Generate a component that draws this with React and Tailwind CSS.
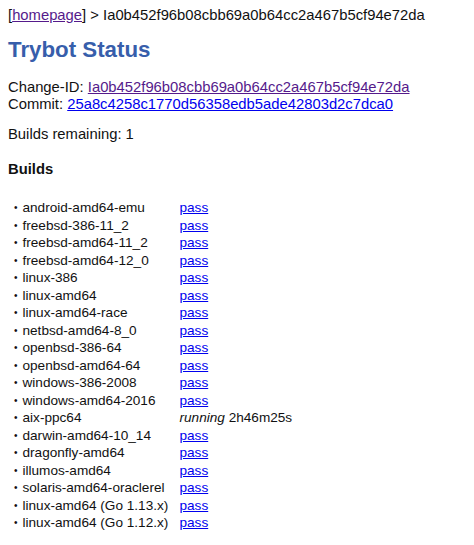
import React from "react";

const builds = [
  ["android-amd64-emu", "pass"],
  ["freebsd-386-11_2", "pass"],
  ["freebsd-amd64-11_2", "pass"],
  ["freebsd-amd64-12_0", "pass"],
  ["linux-386", "pass"],
  ["linux-amd64", "pass"],
  ["linux-amd64-race", "pass"],
  ["netbsd-amd64-8_0", "pass"],
  ["openbsd-386-64", "pass"],
  ["openbsd-amd64-64", "pass"],
  ["windows-386-2008", "pass"],
  ["windows-amd64-2016", "pass"],
  ["aix-ppc64", "running"],
  ["darwin-amd64-10_14", "pass"],
  ["dragonfly-amd64", "pass"],
  ["illumos-amd64", "pass"],
  ["solaris-amd64-oraclerel", "pass"],
  ["linux-amd64 (Go 1.13.x)", "pass"],
  ["linux-amd64 (Go 1.12.x)", "pass"],
];

export default function App() {
  return (
    <div
      className="min-h-[545px] bg-white text-[#111] text-[14.8px] leading-[17.4px] px-[8px] pt-[7px]"
      style={{ fontFamily: '"Liberation Sans", Arial, Helvetica, sans-serif' }}
    >
      <div>
        [<a href="#" className="underline text-[#551a8b]">homepage</a>] &gt; Ia0b452f96b08cbb69a0b64cc2a467b5cf94e72da
      </div>
      <h1 className="mt-[13px] text-[22.3px] leading-[26px] font-bold text-[#375eab]">Trybot Status</h1>
      <div className="mt-[15.3px]">
        Change-ID:{" "}
        <a href="#" className="underline text-[#551a8b]">Ia0b452f96b08cbb69a0b64cc2a467b5cf94e72da</a>
      </div>
      <div>
        Commit:{" "}
        <a href="#" className="underline text-[#0000ee]">25a8c4258c1770d56358edb5ade42803d2c7dca0</a>
      </div>
      <div className="mt-[12.7px]">Builds remaining: 1</div>
      <h3 className="mt-[17.6px] font-bold">Builds</h3>
      <div className="mt-[20.6px] flex flex-col text-[13.6px]">
        {builds.map(([name, status]) => (
          <div key={name} className="flex items-center h-[17.5px] leading-[17.5px]">
            <span className="w-[14.5px] pl-[6px] text-[10px]">•</span>
            <span className="w-[157px] whitespace-nowrap">{name}</span>
            {status === "pass" ? (
              <a href="#" className="underline text-[#0000ee]">pass</a>
            ) : (
              <span className="whitespace-nowrap">
                <i>running</i> 2h46m25s
              </span>
            )}
          </div>
        ))}
      </div>
    </div>
  );
}
